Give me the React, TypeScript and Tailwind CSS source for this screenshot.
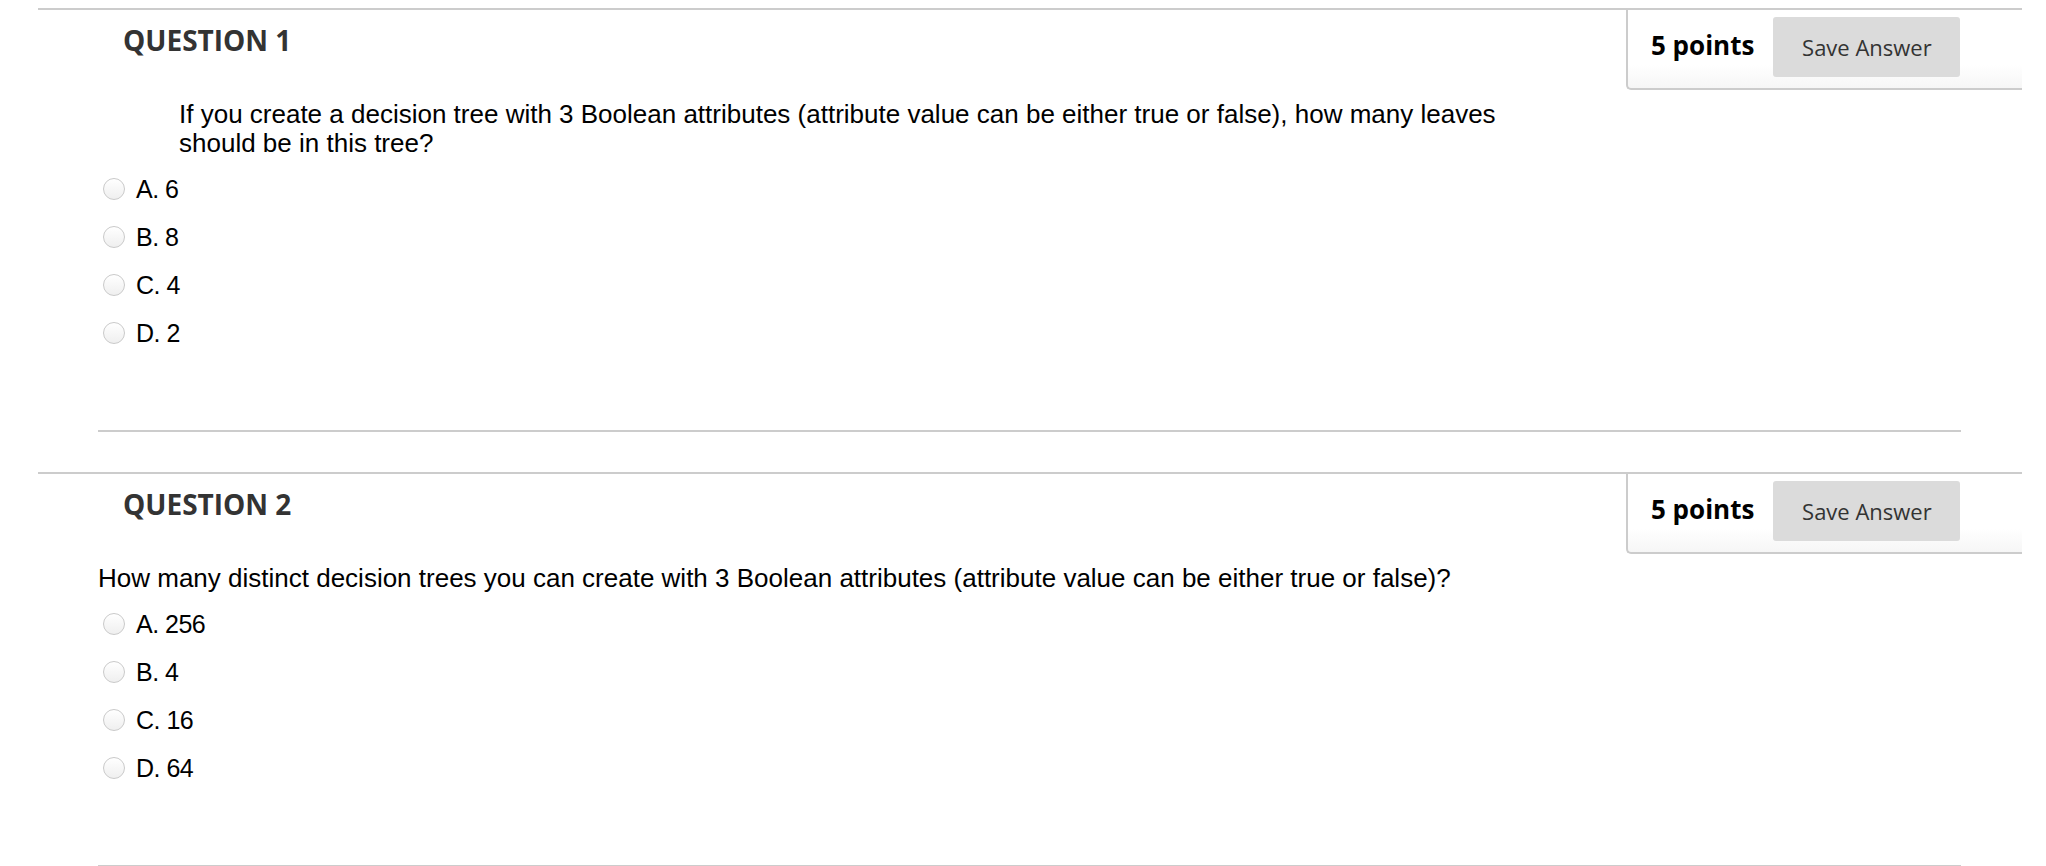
import React from "react";

type Q = {
  n: number;
  text: string;
  indent: boolean;
  options: string[];
};

const questions: Q[] = [
  {
    n: 1,
    text: "If you create a decision tree with 3 Boolean attributes (attribute value can be either true or false), how many leaves should be in this tree?",
    indent: true,
    options: ["A. 6", "B. 8", "C. 4", "D. 2"],
  },
  {
    n: 2,
    text: "How many distinct decision trees you can create with 3 Boolean attributes (attribute value can be either true or false)?",
    indent: false,
    options: ["A. 256", "B. 4", "C. 16", "D. 64"],
  },
];

function Radio() {
  return (
    <span className="block h-[22px] w-[22px] shrink-0 rounded-full border border-[#cacaca] bg-gradient-to-b from-white to-[#efefef]" />
  );
}

function Question({ q }: { q: Q }) {
  return (
    <div className="border-t-2 border-[#cccccc]">
      <div className="flex items-start justify-between">
        <h2
          className="ml-[85px] mt-[11px] text-[28px] font-bold leading-[38px] text-[#333333]"
          style={{ fontFamily: '"Open Sans", sans-serif' }}
        >
          QUESTION {q.n}
        </h2>
        <div className="flex h-[80px] w-[396px] items-start rounded-bl-[5px] border-b-2 border-l-2 border-[#cccccc] bg-gradient-to-b from-white from-70% to-[#f6f6f6] pl-[23px] pt-[7px]">
          <span
            className="mt-[10px] text-[26px] font-bold leading-[36px] text-black"
            style={{ fontFamily: '"Open Sans", sans-serif' }}
          >
            5 points
          </span>
          <button
            className="ml-[19px] flex h-[60px] w-[187px] items-center justify-center rounded-[3px] bg-[#dbdbdb] text-[22px] leading-none text-[#333333]"
            style={{ fontFamily: '"Open Sans", sans-serif' }}
          >
            Save Answer
          </button>
        </div>
      </div>
      <p
        className={
          q.indent
            ? "ml-[141px] mt-[10px] w-[1370px] text-[26px] leading-[29px] text-black"
            : "ml-[60px] mt-[10px] text-[26px] leading-[29px] text-black"
        }
        style={{ fontFamily: '"Liberation Sans", Arial, sans-serif' }}
      >
        {q.text}
      </p>
      <div className="ml-[65px] mt-[7px] flex flex-col">
        {q.options.map((o) => (
          <label key={o} className="flex h-[48px] items-center gap-[11px]">
            <Radio />
            <span
              className="text-[25px] leading-none tracking-[-0.5px] text-black"
              style={{ fontFamily: '"Liberation Sans", Arial, sans-serif' }}
            >
              {o}
            </span>
          </label>
        ))}
      </div>
      <div className="ml-[60px] mr-[61px] mt-[73px] h-[2px] bg-[#cccccc]" />
      <div className="h-[40px]" />
    </div>
  );
}

export default function App() {
  return (
    <div className="min-h-[866px] bg-white pl-[38px] pr-[24px] pt-[8px]">
      {questions.map((q) => (
        <Question key={q.n} q={q} />
      ))}
    </div>
  );
}
